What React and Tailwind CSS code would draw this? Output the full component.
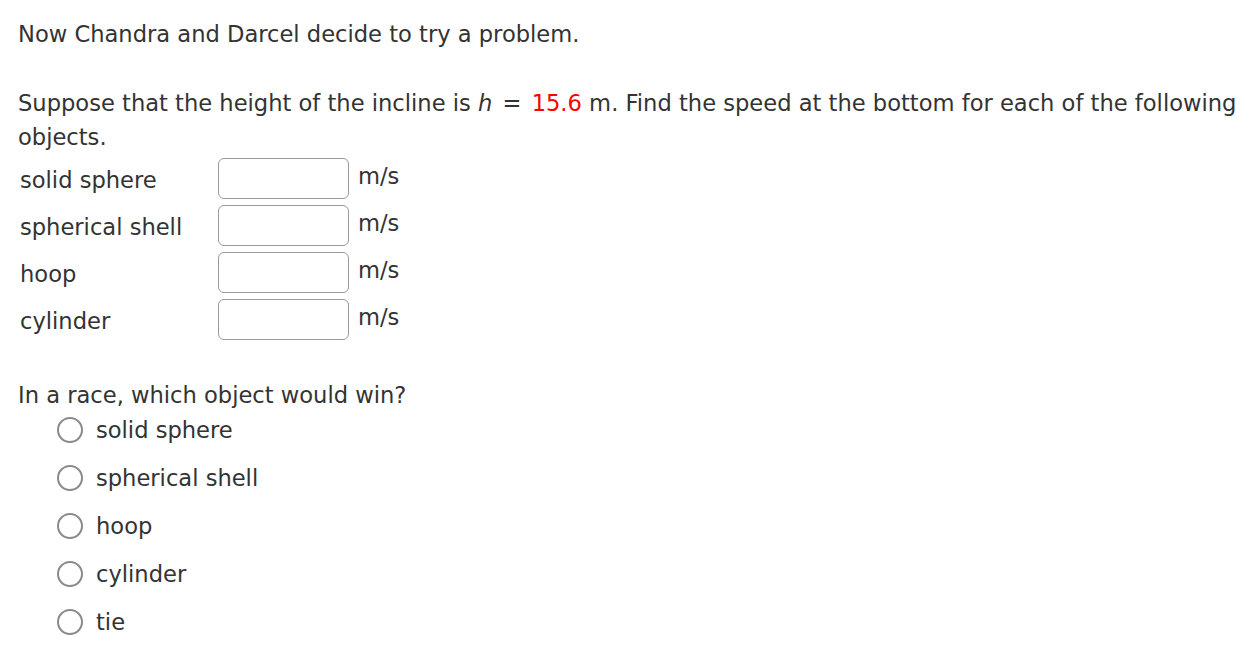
const objects = ["solid sphere", "spherical shell", "hoop", "cylinder"];
const choices = ["solid sphere", "spherical shell", "hoop", "cylinder", "tie"];

export default function App() {
  return (
    <div className="bg-white min-h-[664px] w-[1243px] pl-[18px] pr-[4px] pt-[17px] text-[#333] text-[22.6px] leading-[34px] font-['DejaVu_Sans',Verdana,sans-serif]">
      <p>Now Chandra and Darcel decide to try a problem.</p>

      <p className="mt-[35px]">
        Suppose that the height of the incline is <i>h</i>{" "}
        <span className="px-[3px]">=</span>{" "}
        <span className="text-[#f00]">15.6</span> m. Find the speed at the bottom for each of the following objects.
      </p>

      {/* answer table */}
      <div className="flex flex-col gap-[6px] mt-[4px]">
        {objects.map((name) => (
          <div key={name} className="flex items-start h-[41px]">
            <span className="w-[200px] pl-[2px] mt-[5px]">{name}</span>
            <input
              type="text"
              className="w-[131px] h-[41px] border border-[#9a9a9a] rounded-[6px] outline-none"
            />
            <span className="ml-[9px] mt-[1px]">m/s</span>
          </div>
        ))}
      </div>

      <p className="mt-[38px]">In a race, which object would win?</p>
      <div className="flex flex-col gap-[14px] pl-[39px] pt-[1px]">
        {choices.map((c) => (
          <label key={c} className="flex items-center gap-[13px] h-[34px]">
            <span className="w-[26px] h-[26px] rounded-full border-2 border-[#8a8a8a] bg-white shrink-0" />
            <span>{c}</span>
          </label>
        ))}
      </div>
    </div>
  );
}
